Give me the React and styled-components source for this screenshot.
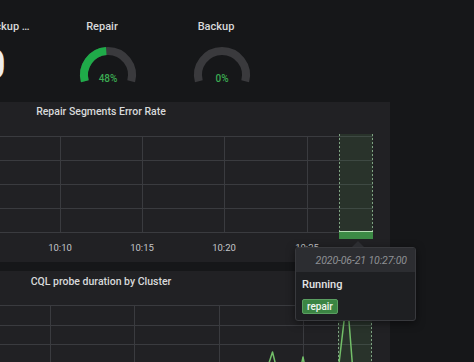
import React from 'react';
import styled, { createGlobalStyle } from 'styled-components';

const Global = createGlobalStyle`
  html, body { margin: 0; padding: 0; background: #161719; }
  body { font-family: Roboto, "Liberation Sans", sans-serif; }
  #root { width: 474px; height: 362px; overflow: hidden; }
`;

const Viewport = styled.div`
  position: relative;
  width: 474px;
  height: 362px;
  overflow: hidden;
  background: #161719;
  color: #d8d9da;
`;

const Canvas = styled.div`
  display: flex;
  flex-direction: column;
  gap: 9px;
  margin-left: -188px;
  width: 578px;
`;

const TopRow = styled.div`
  display: flex;
  height: 93px;
  padding-left: 149px;
`;

const StatPanel = styled.div`
  width: ${p => p.$w}px;
  display: flex;
  flex-direction: column;
  align-items: center;
`;

const PanelTitle = styled.div`
  font-size: 11px;
  font-weight: 500;
  line-height: 16px;
  color: #d8d9da;
  white-space: nowrap;
  margin-top: ${p => p.$top || 0}px;
  margin-right: ${p => p.$shift || 0}px;
  text-align: center;
`;

const BigValue = styled.div`
  font-size: 42px;
  line-height: 42px;
  font-weight: 500;
  color: #ececec;
  margin-top: 9px;
  margin-right: 24px;
`;

const GaugeSvg = styled.svg`
  display: block;
  margin-top: 10px;
`;

const ChartPanel = styled.div`
  background: #212124;
  height: ${p => p.$h}px;
  display: flex;
  flex-direction: column;
  overflow: hidden;
`;

const ChartTitle = styled.div`
  font-size: 10.5px;
  font-weight: 500;
  line-height: 16px;
  color: #d8d9da;
  text-align: center;
  padding-top: ${p => p.$pt}px;
`;

const ChartSvg = styled.svg`
  display: block;
  flex: none;
`;

const Tooltip = styled.div`
  position: absolute;
  left: 295px;
  top: 247px;
  width: 121px;
  height: 74px;
  box-sizing: border-box;
  border: 1px solid #38393d;
  border-radius: 3px;
  background: #1e1f22;
  box-shadow: 0 2px 8px rgba(0,0,0,0.5);
  &::before {
    content: '';
    position: absolute;
    left: 56px;
    top: -7px;
    border-left: 6px solid transparent;
    border-right: 6px solid transparent;
    border-bottom: 6px solid #2c2d31;
  }
`;

const TipHeader = styled.div`
  height: 24px;
  background: #2c2d31;
  border-radius: 2px 2px 0 0;
  display: flex;
  align-items: center;
  justify-content: flex-end;
  padding-right: 8px;
  font-size: 10.5px;
  font-style: italic;
  color: #8e9094;
  letter-spacing: -0.1px;
`;

const TipBody = styled.div`
  display: flex;
  flex-direction: column;
  align-items: flex-start;
  gap: 6px;
  padding: 5px 6px;
`;

const TipText = styled.div`
  font-size: 11px;
  font-weight: 500;
  line-height: 16px;
  color: #e3e4e6;
`;

const Badge = styled.span`
  display: inline-block;
  height: 15px;
  box-sizing: border-box;
  padding: 0 4px;
  border: 1px solid #5a9e61;
  border-radius: 2px;
  background: #3b8543;
  color: #f0f5f0;
  font-size: 10px;
  font-weight: 500;
  line-height: 13px;
`;

function Gauge({ value }) {
  const cx = 32, cy = 30, r = 24;
  const start = 195, sweep = 210;
  const pt = a => {
    const rad = (a * Math.PI) / 180;
    return [cx + r * Math.cos(rad), cy - r * Math.sin(rad)];
  };
  const [sx, sy] = pt(start);
  const [ex, ey] = pt(start - sweep);
  const [vx, vy] = pt(start - (sweep * value) / 100);
  const large = (sweep * value) / 100 > 180 ? 1 : 0;
  return (
    <GaugeSvg width="64" height="44" viewBox="0 0 64 44">
      <path d={`M ${sx} ${sy} A ${r} ${r} 0 1 1 ${ex} ${ey}`} fill="none" stroke="#3a3a3d" strokeWidth="8" />
      {value > 0 && (
        <path d={`M ${sx} ${sy} A ${r} ${r} 0 ${large} 1 ${vx} ${vy}`} fill="none" stroke="#1fab49" strokeWidth="8" />
      )}
      <text x={cx} y="37" textAnchor="middle" fontSize="10" fontWeight="500" fill="#3bab52" fontFamily="Roboto, sans-serif">
        {value}%
      </text>
    </GaugeSvg>
  );
}

const gridColor = '#3a3b3f';

function Chart1() {
  const hLines = [136, 160, 184, 208, 232];
  const vLines = [-186, -104, -22, 60, 142, 224, 307];
  const labels = ['10:00', '10:05', '10:10', '10:15', '10:20', '10:25'];
  return (
    <ChartSvg width="578" height="142" viewBox="-188 120 578 142">
      {hLines.map(y => (
        <line key={y} x1="-188" x2="373" y1={y + 0.5} y2={y + 0.5} stroke={gridColor} strokeWidth="1" />
      ))}
      {vLines.map(x => (
        <line key={x} x1={x + 0.5} x2={x + 0.5} y1="136" y2="232" stroke={gridColor} strokeWidth="1" />
      ))}
      {vLines.slice(1).map((x, i) => (
        <text key={x} x={x} y="250.5" textAnchor="middle" fontSize="9.5" fill="#c4c6ca" fontFamily="Roboto, sans-serif">
          {labels[i]}
        </text>
      ))}
      <rect x="339" y="134" width="34" height="105" fill="rgba(100,180,100,0.12)" />
      <line x1="339.5" x2="339.5" y1="134" y2="239" stroke="#7fa383" strokeWidth="1" strokeDasharray="2 2" />
      <line x1="372.5" x2="372.5" y1="134" y2="239" stroke="#7fa383" strokeWidth="1" strokeDasharray="2 2" />
      <rect x="339" y="231" width="34" height="8" fill="#3c8a45" />
      <line x1="339" x2="373" y1="231.5" y2="231.5" stroke="#b6dcb4" strokeWidth="1" />
    </ChartSvg>
  );
}

function Chart2() {
  const hLines = [305, 325, 344, 364];
  const vLines = [-118, -34, 50, 134, 219, 303];
  return (
    <ChartSvg width="578" height="100" viewBox="-188 290 578 100">
      {hLines.map(y => (
        <line key={y} x1="-188" x2="372" y1={y + 0.5} y2={y + 0.5} stroke={gridColor} strokeWidth="1" />
      ))}
      {vLines.map(x => (
        <line key={x} x1={x + 0.5} x2={x + 0.5} y1="305" y2="390" stroke={gridColor} strokeWidth="1" />
      ))}
      <rect x="338" y="303" width="34" height="90" fill="rgba(100,180,100,0.12)" />
      <line x1="338.5" x2="338.5" y1="303" y2="390" stroke="#7fa383" strokeWidth="1" strokeDasharray="2 2" />
      <line x1="371.5" x2="371.5" y1="303" y2="390" stroke="#7fa383" strokeWidth="1" strokeDasharray="2 2" />
      <polyline
        points="250,372 268,366 272.5,352 276,366 300,372 303,357 306,372 338,372 347,296 353,372 372,372"
        fill="none"
        stroke="#73bf69"
        strokeWidth="1.5"
        strokeLinejoin="round"
      />
    </ChartSvg>
  );
}

export default function App() {
  return (
    <Viewport>
      <Global />
      <Canvas>
        <TopRow>
          <StatPanel $w={90}>
            <PanelTitle $top={19}>Backup …</PanelTitle>
            <BigValue>0</BigValue>
          </StatPanel>
          <StatPanel $w={114}>
            <PanelTitle $top={19} $shift={12}>Repair</PanelTitle>
            <Gauge value={48} />
          </StatPanel>
          <StatPanel $w={114}>
            <PanelTitle $top={19} $shift={12}>Backup</PanelTitle>
            <Gauge value={0} />
          </StatPanel>
        </TopRow>
        <ChartPanel $h={160}>
          <ChartTitle $pt={2}>Repair Segments Error Rate</ChartTitle>
          <Chart1 />
        </ChartPanel>
        <ChartPanel $h={120}>
          <ChartTitle $pt={3}>CQL probe duration by Cluster</ChartTitle>
          <Chart2 />
        </ChartPanel>
      </Canvas>
      <Tooltip>
        <TipHeader>2020-06-21 10:27:00</TipHeader>
        <TipBody>
          <TipText>Running</TipText>
          <Badge>repair</Badge>
        </TipBody>
      </Tooltip>
    </Viewport>
  );
}
